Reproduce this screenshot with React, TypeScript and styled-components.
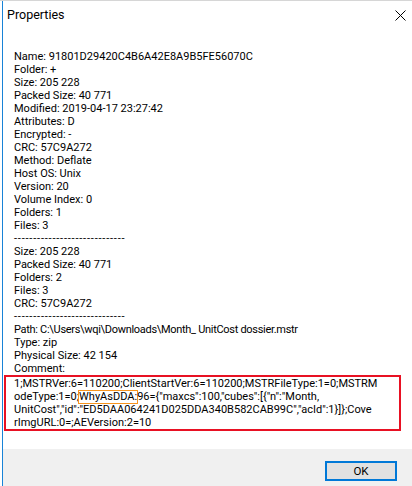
import React from "react";
import styled, { createGlobalStyle } from "styled-components";

const GlobalStyle = createGlobalStyle`
  html, body {
    margin: 0;
    padding: 0;
    background: #ffffff;
  }
  body {
    font-family: "Segoe UI", Roboto, "Open Sans", sans-serif;
  }
`;

interface InfoLineType {
  text: string;
  spacing?: number;
}

const DIVIDER = "-----------------------------";

const infoLines: InfoLineType[] = [
  { text: "Name: 91801D29420C4B6A42E8A9B5FE56070C" },
  { text: "Folder: +" },
  { text: "Size: 205 228" },
  { text: "Packed Size: 40 771" },
  { text: "Modified: 2019-04-17 23:27:42" },
  { text: "Attributes: D" },
  { text: "Encrypted: -" },
  { text: "CRC: 57C9A272" },
  { text: "Method: Deflate" },
  { text: "Host OS: Unix" },
  { text: "Version: 20" },
  { text: "Volume Index: 0" },
  { text: "Folders: 1" },
  { text: "Files: 3" },
  { text: DIVIDER, spacing: 0.8 },
  { text: "Size: 205 228" },
  { text: "Packed Size: 40 771" },
  { text: "Folders: 2" },
  { text: "Files: 3" },
  { text: "CRC: 57C9A272" },
  { text: DIVIDER, spacing: 0.8 },
  { text: "Path: C:\\Users\\wqi\\Downloads\\Month_ UnitCost dossier.mstr", spacing: -0.3 },
  { text: "Type: zip" },
  { text: "Physical Size: 42 154" },
  { text: "Comment:" },
];

const App: React.FC = () => {
  return (
    <>
      <GlobalStyle />
      <S.Screen>
        <S.Window>
          <S.TitleBar>
            <span>Properties</span>
            <S.CloseBtn>
              <svg width={11} height={11} viewBox="0 0 11 11">
                <path d="M0.5 0.5 L10.5 10.5 M10.5 0.5 L0.5 10.5" stroke="#000" strokeWidth={1} />
              </svg>
            </S.CloseBtn>
          </S.TitleBar>
          <S.Body>
            {infoLines.map(({ text, spacing }, i) => (
              <S.Line key={i} $spacing={spacing ?? 0}>
                {text}
              </S.Line>
            ))}
            <S.CommentBox>
              <S.CommentLine>
                1;MSTRVer:6=110200;ClientStartVer:6=110200;MSTRFileType:1=0;MSTRM
              </S.CommentLine>
              <S.CommentLine>
                odeType:1=0;<S.Mark>WhyAsDDA:</S.Mark>96={"{"}"maxcs":100,"cubes":[{"{"}"n":"Month,
              </S.CommentLine>
              <S.CommentLine>
                UnitCost","id":"ED5DAA064241D025DDA340B582CAB99C","acId":1{"}"}]{"}"};Cove
              </S.CommentLine>
              <S.CommentLine>rImgURL:0=;AEVersion:2=10</S.CommentLine>
            </S.CommentBox>
          </S.Body>
          <S.Footer>
            <S.OkButton>OK</S.OkButton>
          </S.Footer>
        </S.Window>
      </S.Screen>
    </>
  );
};

const S = {
  Screen: styled.div`
    width: 412px;
    height: 486px;
    padding-left: 2px;
    box-sizing: border-box;
    border-top: 1px solid #d6d6d6;
    overflow: hidden;
  `,
  Window: styled.div`
    height: 100%;
    display: flex;
    flex-direction: column;
    border-left: 1px solid #1883d7;
    background: #ffffff;
  `,
  TitleBar: styled.div`
    height: 27px;
    display: flex;
    align-items: center;
    justify-content: space-between;
    padding: 0 6px 0 4px;
    span {
      font-size: 12.5px;
      color: #000000;
    }
  `,
  CloseBtn: styled.div`
    width: 11px;
    height: 11px;
    display: flex;
    margin-top: 1px;
  `,
  Body: styled.div`
    padding: 22px 11px 0 1px;
    display: flex;
    flex-direction: column;
  `,
  Line: styled.div<{ $spacing: number }>`
    padding-left: 10px;
    font-size: 11px;
    line-height: 13px;
    height: 13px;
    white-space: pre;
    letter-spacing: ${({ $spacing }) => $spacing}px;
    color: #000000;
  `,
  CommentBox: styled.div`
    border: 2px solid #e81123;
    padding: 0 0 0 8px;
  `,
  CommentLine: styled.div`
    font-size: 11px;
    line-height: 13px;
    height: 13px;
    white-space: pre;
    color: #000000;
  `,
  Mark: styled.span`
    display: inline-block;
    height: 12px;
    line-height: 12px;
    outline: 1px solid #f7941d;
  `,
  Footer: styled.div`
    margin-top: auto;
    height: 37px;
    background: #f0f0f0;
    display: flex;
    justify-content: flex-end;
    align-items: flex-start;
    padding: 12px 15px 0 0;
    box-sizing: border-box;
  `,
  OkButton: styled.button`
    width: 72px;
    height: 20px;
    padding: 0;
    border: 2px solid #0078d7;
    background: #e1e1e1;
    font-family: "Segoe UI", Roboto, "Open Sans", sans-serif;
    font-size: 11.5px;
    color: #000000;
    line-height: 16px;
  `,
};

export default App;
